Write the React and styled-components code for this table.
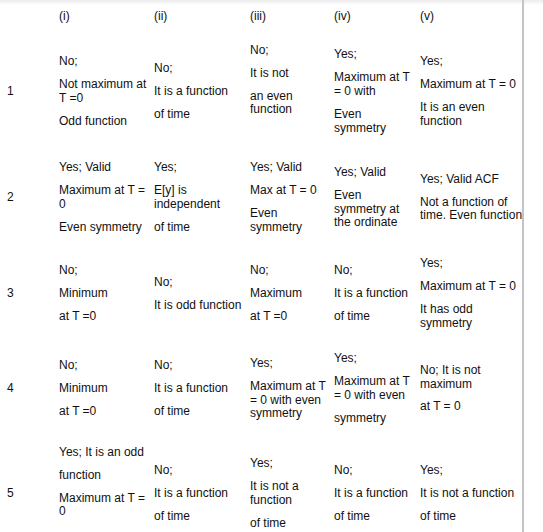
import React from "react";
import styled, { createGlobalStyle } from "styled-components";

const GlobalStyle = createGlobalStyle`
  html, body {
    margin: 0;
    padding: 0;
    background: #fff;
  }
  body {
    font-family: "Liberation Sans", Arial, sans-serif;
    font-size: 12px;
    color: #111;
  }
`;

const Page = styled.div`
  height: 100vh;
  overflow: hidden;
  background: linear-gradient(#ebebeb, #fff 5px);
`;

const Sheet = styled.div`
  box-sizing: border-box;
  width: 524px;
  height: 100%;
  border-right: 2px solid #c4c4c4;
  overflow: hidden;
`;

const Row = styled.div`
  display: grid;
  grid-template-columns: 59px 95px 96px 84px 86px 111px;
  align-items: center;
  height: ${(p) => p.$h}px;
`;

const NumCell = styled.div`
  padding-left: 7px;
  line-height: 13.8px;
`;

const Cell = styled.div`
  display: flex;
  flex-direction: column;
  gap: 9.2px;
  padding-right: 6px;
`;

const Para = styled.p`
  margin: 0;
  line-height: 13.8px;
  min-height: 13.8px;
`;

const header = ["(i)", "(ii)", "(iii)", "(iv)", "(v)"];

const rows = [
  {
    n: "1",
    h: 116,
    cells: [
      ["No;", "Not maximum at T =0", "Odd function"],
      ["No;", "It is a function", "of time"],
      ["No;", "It is not", "an even function", ""],
      ["Yes;", "Maximum at T = 0 with", "Even symmetry"],
      ["Yes;", "Maximum at T = 0", "It is an even function"],
    ],
  },
  {
    n: "2",
    h: 96,
    cells: [
      ["Yes; Valid", "Maximum at T = 0", "Even symmetry"],
      ["Yes;", "E[y] is independent", "of time"],
      ["Yes; Valid", "Max at T = 0", "Even symmetry"],
      ["Yes; Valid", "Even symmetry at the ordinate"],
      ["Yes; Valid ACF", "Not a function of time. Even function"],
    ],
  },
  {
    n: "3",
    h: 96,
    cells: [
      ["No;", "Minimum", "at T =0"],
      ["No;", "It is odd function"],
      ["No;", "Maximum", "at T =0"],
      ["No;", "It is a function", "of time"],
      ["Yes;", "Maximum at T = 0", "It has odd symmetry"],
    ],
  },
  {
    n: "4",
    h: 94,
    cells: [
      ["No;", "Minimum", "at T =0"],
      ["No;", "It is a function", "of time"],
      ["Yes;", "Maximum at T = 0 with even symmetry"],
      ["Yes;", "Maximum at T = 0 with even", "symmetry"],
      ["No; It is not maximum", "at T = 0"],
    ],
  },
  {
    n: "5",
    h: 116,
    cells: [
      ["Yes; It is an odd", "function", "Maximum at T = 0", ""],
      ["No;", "It is a function", "of time"],
      ["Yes;", "It is not a function", "of time"],
      ["No;", "It is a function", "of time"],
      ["Yes;", "It is not a function", "of time"],
    ],
  },
];

export default function App() {
  return (
    <Page>
      <GlobalStyle />
      <Sheet>
        <Row $h={34}>
          <NumCell />
          {header.map((h) => (
            <Cell key={h}>
              <Para>{h}</Para>
            </Cell>
          ))}
        </Row>
        {rows.map((r) => (
          <Row key={r.n} $h={r.h}>
            <NumCell>{r.n}</NumCell>
            {r.cells.map((c, i) => (
              <Cell key={i}>
                {c.map((t, j) => (
                  <Para key={j}>{t}</Para>
                ))}
              </Cell>
            ))}
          </Row>
        ))}
      </Sheet>
    </Page>
  );
}
